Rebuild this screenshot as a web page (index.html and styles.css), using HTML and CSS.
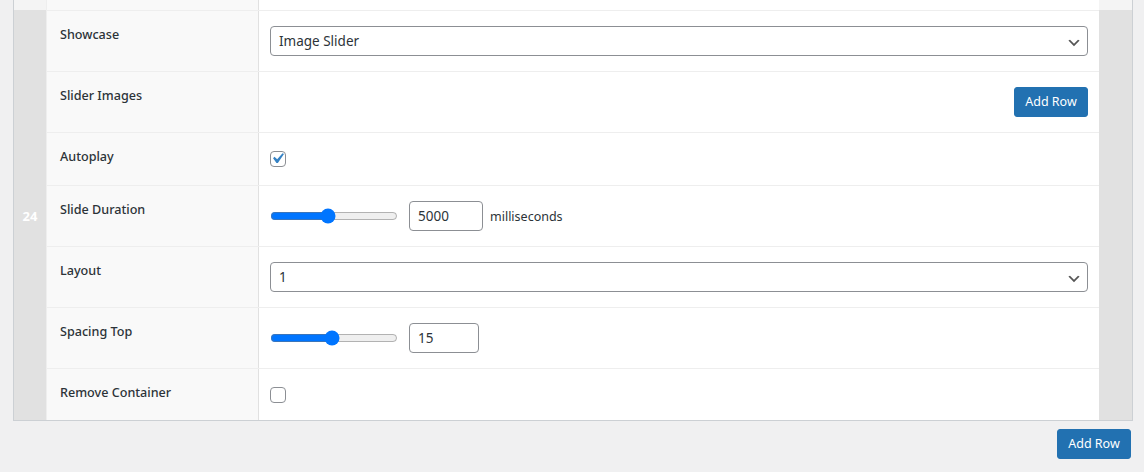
FILE: index.html
```html
<!DOCTYPE html>
<html lang="en">
<head>
<meta charset="utf-8">
<title>Repeater</title>
<link rel="stylesheet" href="styles.css">
</head>
<body>
<div class="page">
  <div class="repeater">
    <div class="rrow rrow-prev">
      <div class="handle handle-left handle-light"></div>
      <div class="fields"></div>
      <div class="handle handle-right handle-light"></div>
    </div>
    <div class="rrow rrow-active">
      <div class="handle handle-left handle-dark"><span class="order">24</span></div>
      <div class="fields">
        <div class="field">
          <div class="label">Showcase</div>
          <div class="input">
            <div class="select">
              <span class="select-value">Image Slider</span>
              <svg class="chevron" viewBox="0 0 20 20" width="16" height="16"><path d="M5 6l5 5 5-5 2 1-7 7-7-7 2-1z" fill="#555"/></svg>
            </div>
          </div>
        </div>
        <div class="field">
          <div class="label">Slider Images</div>
          <div class="input input-end">
            <button class="btn" type="button">Add Row</button>
          </div>
        </div>
        <div class="field field-check">
          <div class="label">Autoplay</div>
          <div class="input">
            <span class="checkbox checked">
              <svg viewBox="0 0 20 20" width="21" height="21"><path d="M14.83 4.89l1.34.94-5.81 8.38H9.02L5.78 9.67l1.34-1.250 2.57 2.4z" fill="#3582c4"/></svg>
            </span>
          </div>
        </div>
        <div class="field">
          <div class="label">Slide Duration</div>
          <div class="input input-inline">
            <input class="range" type="range" min="1000" max="10000" value="5000">
            <span class="number number-wide">5000</span>
            <span class="append">milliseconds</span>
          </div>
        </div>
        <div class="field">
          <div class="label">Layout</div>
          <div class="input">
            <div class="select">
              <span class="select-value">1</span>
              <svg class="chevron" viewBox="0 0 20 20" width="16" height="16"><path d="M5 6l5 5 5-5 2 1-7 7-7-7 2-1z" fill="#555"/></svg>
            </div>
          </div>
        </div>
        <div class="field">
          <div class="label">Spacing Top</div>
          <div class="input input-inline">
            <input class="range" type="range" min="0" max="31" value="15">
            <span class="number">15</span>
          </div>
        </div>
        <div class="field field-check field-last">
          <div class="label">Remove Container</div>
          <div class="input">
            <span class="checkbox"></span>
          </div>
        </div>
      </div>
      <div class="handle handle-right handle-dark"></div>
    </div>
  </div>
  <div class="actions">
    <button class="btn" type="button">Add Row</button>
  </div>
</div>
</body>
</html>
```

FILE: styles.css
```css
* { box-sizing: border-box; }

html, body {
  margin: 0;
  padding: 0;
  background: #f0f0f1;
  font-family: "Noto Sans", "Open Sans", sans-serif;
  font-size: 13px;
  color: #1d2327;
}

.page {
  padding: 0 11px 0 13px;
}

.repeater {
  border: 1px solid #ccd0d4;
  border-top: none;
  background: #fff;
}

.rrow {
  display: grid;
  grid-template-columns: 33px 1fr 33px;
}

.rrow-prev {
  height: 10px;
}

.handle {
  display: flex;
  align-items: center;
  justify-content: center;
}

.handle-left {
  border-right: 1px solid #eeeeee;
}

.handle-light { background: #f4f4f4; }
.handle-dark { background: #e1e1e1; }

.rrow-prev .fields {
  background: linear-gradient(to right, #f9f9f9 211px, #e1e1e1 211px, #e1e1e1 212px, #fff 212px);
}

.order {
  color: #fff;
  font-weight: 700;
  font-size: 13px;
  font-family: "Noto Sans", sans-serif;
  padding-top: 1px;
}

.field {
  display: grid;
  grid-template-columns: 212px 1fr;
  border-top: 1px solid #eeeeee;
}

.label {
  background: #f9f9f9;
  border-right: 1px solid #e1e1e1;
  padding: 14px 13px 16px;
  font-weight: 500;
  line-height: 20px;
  font-size: 12.6px;
  color: #2c3338;
}

.input {
  padding: 15px 11px;
  display: flex;
  align-items: flex-start;
}

.input-end { justify-content: flex-end; }

.input-inline { align-items: center; }

.field-check .label { padding-bottom: 18px; }
.field-check .input { padding-top: 18px; }
.field-last .label { padding-bottom: 17px; }

.select {
  position: relative;
  width: 100%;
  height: 30px;
  border: 1px solid #8c8f94;
  border-radius: 4px;
  background: #fff;
  padding: 0 24px 0 8px;
  display: flex;
  align-items: center;
  font-size: 13.5px;
  color: #2c3338;
}

.chevron {
  position: absolute;
  right: 5px;
  top: 7.7px;
}

.btn {
  height: 30px;
  min-width: 74px;
  padding: 0 10px;
  background: #2271b1;
  border: 1px solid #2271b1;
  border-radius: 3px;
  color: #fff;
  font-family: "Noto Sans", sans-serif;
  font-size: 12.5px;
  line-height: 28px;
  cursor: pointer;
}

.checkbox {
  display: block;
  width: 16px;
  height: 16px;
  border: 1px solid #8c8f94;
  border-radius: 4px;
  background: #fff;
  position: relative;
}

.checkbox svg {
  position: absolute;
  left: -4px;
  top: -4px;
}

.range {
  margin: 0 11px 0 0;
  width: 128px;
}

.number {
  display: flex;
  align-items: center;
  height: 30px;
  width: 70px;
  padding: 0 8px;
  border: 1px solid #8c8f94;
  border-radius: 4px;
  background: #fff;
  font-size: 13.5px;
  color: #2c3338;
}

.number-wide { width: 74px; }

.append {
  margin-left: 7px;
  font-size: 12.5px;
  color: #2c3338;
}

.actions {
  display: flex;
  justify-content: flex-end;
  padding: 8px 2px 0 0;
}
```
